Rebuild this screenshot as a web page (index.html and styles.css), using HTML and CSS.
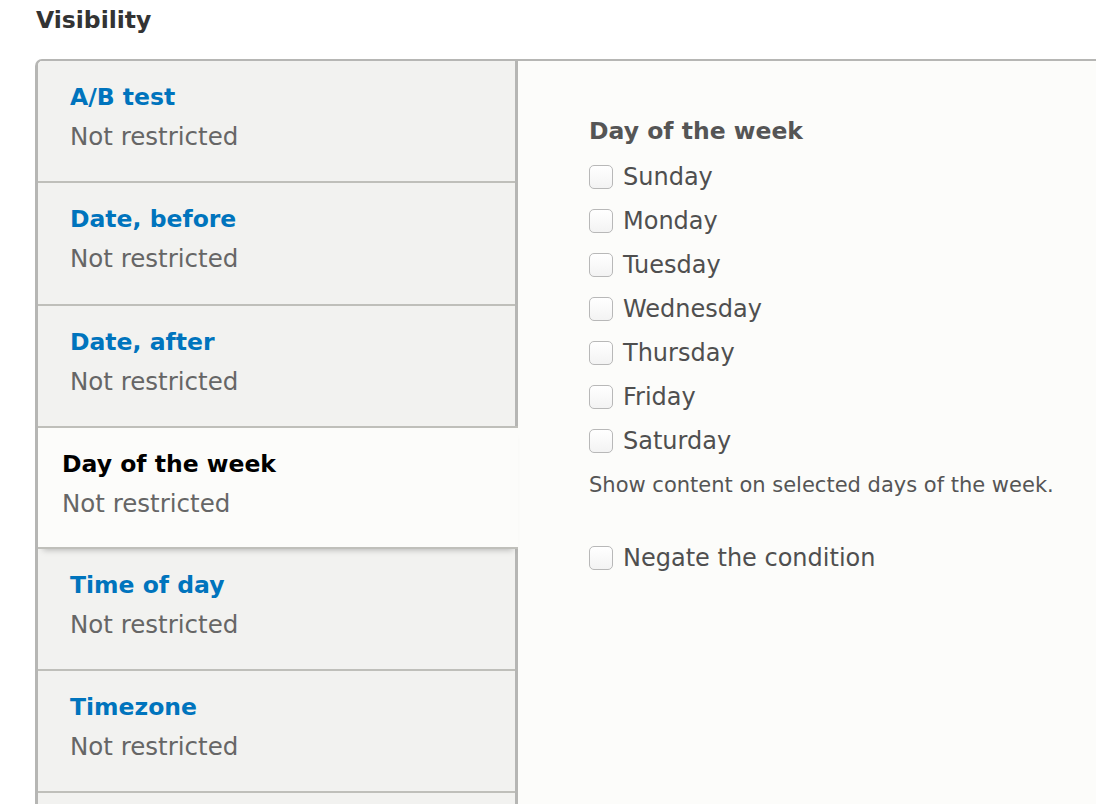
FILE: index.html
```html
<!DOCTYPE html>
<html lang="en">
<head>
<meta charset="utf-8">
<title>Visibility</title>
<link rel="stylesheet" href="styles.css">
</head>
<body>
<h2 class="section-title">Visibility</h2>
<div class="vtabs">
  <ul class="vtabs-menu">
    <li class="vtab"><a class="vtab-title" href="#">A/B test</a><span class="vtab-summary">Not restricted</span></li>
    <li class="vtab"><a class="vtab-title" href="#">Date, before</a><span class="vtab-summary">Not restricted</span></li>
    <li class="vtab"><a class="vtab-title" href="#">Date, after</a><span class="vtab-summary">Not restricted</span></li>
    <li class="vtab is-selected"><a class="vtab-title" href="#">Day of the week</a><span class="vtab-summary">Not restricted</span></li>
    <li class="vtab"><a class="vtab-title" href="#">Time of day</a><span class="vtab-summary">Not restricted</span></li>
    <li class="vtab"><a class="vtab-title" href="#">Timezone</a><span class="vtab-summary">Not restricted</span></li>
    <li class="vtab"></li>
  </ul>
  <div class="vtabs-pane">
    <div class="field-label">Day of the week</div>
    <label class="check-row"><input type="checkbox" class="check"><span>Sunday</span></label>
    <label class="check-row"><input type="checkbox" class="check"><span>Monday</span></label>
    <label class="check-row"><input type="checkbox" class="check"><span>Tuesday</span></label>
    <label class="check-row"><input type="checkbox" class="check"><span>Wednesday</span></label>
    <label class="check-row"><input type="checkbox" class="check"><span>Thursday</span></label>
    <label class="check-row"><input type="checkbox" class="check"><span>Friday</span></label>
    <label class="check-row"><input type="checkbox" class="check"><span>Saturday</span></label>
    <div class="description">Show content on selected days of the week.</div>
    <label class="check-row negate"><input type="checkbox" class="check"><span>Negate the condition</span></label>
  </div>
</div>
</body>
</html>
```
FILE: styles.css
```css
html, body {
  margin: 0;
  padding: 0;
  background: #ffffff;
  overflow: hidden;
}
body {
  width: 1096px;
  height: 804px;
  font-family: "DejaVu Sans", "Noto Sans", sans-serif;
  color: #333;
}
.section-title {
  margin: 0;
  padding: 3px 0 0 36px;
  height: 59px;
  box-sizing: border-box;
  font-size: 23.5px;
  line-height: 34px;
  font-weight: bold;
  color: #333;
}
.vtabs {
  margin-left: 35px;
  width: 1100px;
  height: 743px;
  display: flex;
  border-top: 2px solid #b6b6b4;
  border-left: 3px solid #b6b6b4;
  border-top-left-radius: 7px;
  background: #fcfcfa;
  overflow: hidden;
}
.vtabs-menu {
  list-style: none;
  margin: 0;
  padding: 0;
  width: 480px;
  flex: none;
  box-sizing: border-box;
  border-right: 3px solid #b6b6b4;
  background: #f2f2f0;
}
.vtab {
  height: 122.4px;
  box-sizing: border-box;
  border-bottom: 2px solid #bfbfba;
  padding: 17px 0 0 32px;
  display: flex;
  flex-direction: column;
  background: #f2f2f0;
}
.vtab-title {
  font-size: 23.5px;
  line-height: 39px;
  font-weight: bold;
  color: #0074bd;
  text-decoration: none;
}
.vtab-summary {
  font-size: 24.5px;
  line-height: 39px;
  color: #666;
}
.vtab.is-selected {
  position: relative;
  z-index: 1;
  margin-right: -3px;
  margin-top: -2px;
  border-top: 2px solid #bfbfba;
  padding-left: 24px;
  background: #fcfcfa;
  box-shadow: 0 6px 6px -5px rgba(0, 0, 0, 0.25);
}
.vtab.is-selected .vtab-title {
  color: #000;
}
.vtabs-pane {
  flex: 1;
  padding: 51px 0 0 71px;
  background: #fcfcfa;
}
.field-label {
  font-size: 23.5px;
  line-height: 39px;
  font-weight: bold;
  color: #555;
  margin-bottom: 4px;
}
.check-row {
  display: flex;
  align-items: center;
  height: 44px;
  font-size: 24px;
  color: #4f4f4f;
}
.check {
  appearance: none;
  -webkit-appearance: none;
  width: 24px;
  height: 24px;
  margin: 0 10px 0 0;
  box-sizing: border-box;
  border: 1.5px solid #b8b8b8;
  border-radius: 5px;
  background: linear-gradient(#ffffff, #f3f3f3);
  flex: none;
}
.description {
  font-size: 21px;
  line-height: 30px;
  color: #555;
  margin-top: 7px;
}
.check-row.negate {
  margin-top: 36px;
}
```
